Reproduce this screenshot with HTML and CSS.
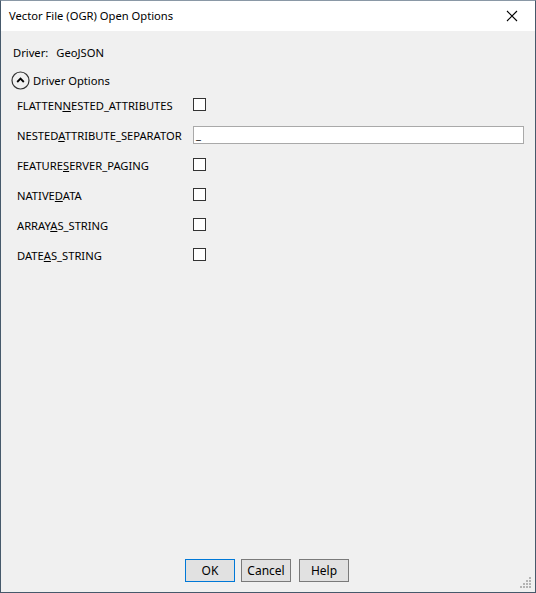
FILE: index.html
```html
<!DOCTYPE html>
<html>
  <head>
    <title>Vector File (OGR) Open Options</title>
    <meta charset="utf-8" />
    <link rel="stylesheet" href="styles.css">
  </head>
  <body>
    <div class="window">
      <div class="titlebar">
        <span class="title">Vector File (OGR) Open Options</span>
        <svg class="close" width="12" height="12" viewBox="0 0 12 12">
          <path d="M1 1 L11 11 M11 1 L1 11" stroke="#000" stroke-width="1.1" fill="none" />
        </svg>
      </div>

      <div class="content">
        <div class="driver">
          <span>Driver:</span>
          <span class="driver-name">GeoJSON</span>
        </div>

        <div class="group">
          <svg class="toggle" width="19" height="19" viewBox="0 0 19 19">
            <circle cx="9.5" cy="9.5" r="8.5" stroke="#333" stroke-width="1.2" fill="none" />
            <path d="M6.2 11 L9.5 7.6 L12.8 11" stroke="#000" stroke-width="1.8" fill="none" />
          </svg>
          <span>Driver Options</span>
        </div>

        <div class="options">
          <div class="row">
            <label>FLATTEN<u>N</u>ESTED_ATTRIBUTES</label>
            <span class="check"></span>
          </div>
          <div class="row">
            <label>NESTED<u>A</u>TTRIBUTE_SEPARATOR</label>
            <div class="input">_</div>
          </div>
          <div class="row">
            <label>FEATURE<u>S</u>ERVER_PAGING</label>
            <span class="check"></span>
          </div>
          <div class="row">
            <label>NATIVE<u>D</u>ATA</label>
            <span class="check"></span>
          </div>
          <div class="row">
            <label>ARRAY<u>A</u>S_STRING</label>
            <span class="check"></span>
          </div>
          <div class="row">
            <label>DATE<u>A</u>S_STRING</label>
            <span class="check"></span>
          </div>
        </div>
      </div>

      <div class="buttons">
        <button class="btn default">OK</button>
        <button class="btn">Cancel</button>
        <button class="btn">Help</button>
      </div>

      <svg class="grip" width="12" height="12" viewBox="0 0 12 12">
        <rect x="9" y="0" width="2" height="2" fill="#b4b4b4" />
        <rect x="6" y="3" width="2" height="2" fill="#b4b4b4" />
        <rect x="9" y="3" width="2" height="2" fill="#b4b4b4" />
        <rect x="3" y="6" width="2" height="2" fill="#b4b4b4" />
        <rect x="6" y="6" width="2" height="2" fill="#b4b4b4" />
        <rect x="9" y="6" width="2" height="2" fill="#b4b4b4" />
        <rect x="0" y="9" width="2" height="2" fill="#b4b4b4" />
        <rect x="3" y="9" width="2" height="2" fill="#b4b4b4" />
        <rect x="6" y="9" width="2" height="2" fill="#b4b4b4" />
        <rect x="9" y="9" width="2" height="2" fill="#b4b4b4" />
      </svg>
    </div>
  </body>
</html>
```

FILE: styles.css
```css
html, body {
  margin: 0;
  padding: 0;
}
body {
  font-family: "Noto Sans", "Liberation Sans", sans-serif;
  font-size: 11.2px;
  color: #000;
  background: #f0f0f0;
}
.window {
  position: relative;
  box-sizing: border-box;
  width: 536px;
  height: 593px;
  border: 1px solid #46596b;
  border-top-color: #8a98a6;
  background: #f0f0f0;
  display: flex;
  flex-direction: column;
}
.titlebar {
  height: 30px;
  background: #fff;
  display: flex;
  align-items: center;
  justify-content: space-between;
  padding: 0 17px 0 8px;
}
.title {
  margin-top: -1px;
}
.content {
  flex: 1;
  padding: 13px 11px 0 12px;
}
.driver {
  display: flex;
  gap: 8px;
  height: 16px;
  align-items: center;
}
.group {
  display: flex;
  align-items: center;
  gap: 3px;
  margin-top: 10px;
  margin-left: -2px;
  height: 20px;
}
.options {
  padding-left: 4px;
}
.row {
  display: flex;
  align-items: center;
  height: 30px;
}
.row label {
  width: 176px;
}
.check {
  box-sizing: border-box;
  width: 13px;
  height: 13px;
  border: 1px solid #333;
  background: #fff;
  margin-top: -1px;
}
.input {
  box-sizing: border-box;
  flex: 1;
  height: 18px;
  border: 1px solid #a9a9a9;
  background: #fff;
  padding: 1px 2px;
  line-height: 14px;
}
.buttons {
  display: flex;
  justify-content: center;
  gap: 6px;
  padding: 0 2px 10px 0;
}
.btn {
  box-sizing: border-box;
  width: 50px;
  height: 23px;
  font-family: inherit;
  font-size: 12px;
  background: #e1e1e1;
  border: 1px solid #7a7a7a;
  padding: 0;
  color: #000;
}
.btn.default {
  border-color: #0078d7;
}
.btn:nth-child(3) {
  margin-left: 2px;
}
.grip {
  position: absolute;
  right: 3px;
  bottom: 3px;
}
```
